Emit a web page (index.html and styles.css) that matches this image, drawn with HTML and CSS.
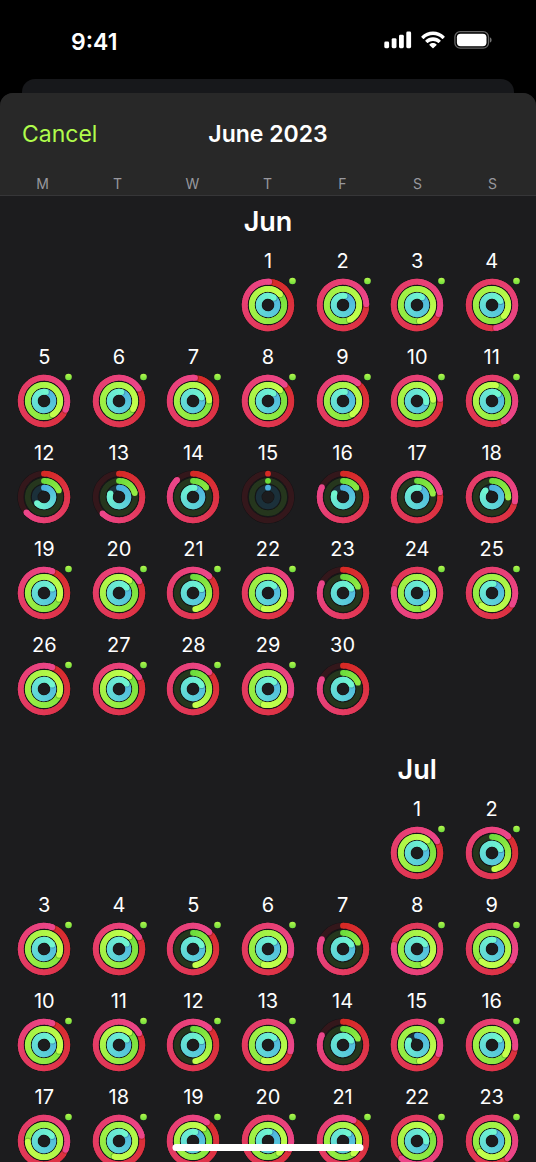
FILE: index.html
```html
<!DOCTYPE html>
<html lang="en">
<head>
<meta charset="utf-8">
<meta name="viewport" content="width=device-width, initial-scale=1">
<title>June 2023</title>
<link rel="stylesheet" href="styles.css">
</head>
<body>
<div class="screen">
  <div class="status-bar">
    <span class="status-time">9:41</span>
    <div class="status-icons">
      <svg class="icon-signal" viewBox="0 0 28 18" width="28" height="18" aria-hidden="true">
        <rect x="0.3" y="10.6" width="4.8" height="6.6" rx="1.4"/>
        <rect x="7.7" y="7.2" width="4.8" height="10" rx="1.4"/>
        <rect x="15" y="3.8" width="4.8" height="13.4" rx="1.4"/>
        <rect x="22.3" y="0.6" width="4.8" height="16.6" rx="1.4"/>
      </svg>
      <svg class="icon-wifi" viewBox="0 0 24 18" width="24" height="18" aria-hidden="true">
        <path d="M12 .6C7.600 .6 3.500 2.300.5 5.200c-.3.3-.3.7 0 1L2 7.700c.3.300.7.300 1 0C5.400 5.400 8.600 4.100 12 4.100s6.600 1.300 9 3.600c.3.300.7.300 1 0l1.500-1.500c.3-.3.300-.7 0-1C20.500 2.300 16.400.6 12 .6z"/>
        <path d="M12 6.300c-2.900 0-5.500 1.100-7.500 2.900-.3.300-.3.700 0 1L6.100 11.800c.3.300.7.300 1 0 1.300-1.200 3-1.900 4.900-1.900s3.600.7 4.900 1.900c.3.300.7.300 1 0l1.600-1.600c.3-.3.300-.7 0-1C17.500 7.400 14.900 6.300 12 6.300z"/>
        <path d="M12 11.900c-1.300 0-2.500.5-3.400 1.300-.3.300-.3.700 0 1l2.900 2.900c.3.300.7.300 1 0l2.900-2.900c.3-.3.300-.7 0-1-.9-.8-2.100-1.300-3.400-1.300z"/>
      </svg>
      <svg class="icon-battery" viewBox="0 0 38 18" width="38" height="18" aria-hidden="true">
        <rect x="0.900" y="0.700" width="33.600" height="16.500" rx="5.300" fill="none" stroke="#fff" stroke-opacity=".4" stroke-width="1.300"/>
        <rect x="2.900" y="2.700" width="29.600" height="12.500" rx="3.600"/>
        <path d="M35.900 6.300v5.300c1-.4 1.700-1.400 1.700-2.650s-.7-2.250-1.700-2.650z" fill-opacity=".45"/>
      </svg>
    </div>
  </div>
  <div class="sheet-behind"></div>
  <main class="sheet">
    <header class="sheet-header">
      <div class="nav">
        <button class="cancel" type="button">Cancel</button>
        <h1 class="nav-title">June 2023</h1>
      </div>
      <div class="weekdays">
        <span>M</span><span>T</span><span>W</span><span>T</span><span>F</span><span>S</span><span>S</span>
      </div>
    </header>
    <div class="months" id="months"></div>
  </main>
  <div class="home-indicator"></div>
</div>
<script src="calendar.js"></script>
</body>
</html>
```
FILE: styles.css
```css
* {
  box-sizing: border-box;
}

body {
  margin: 0;
  background: #000;
  color: #fff;
  font-family: Inter, "Liberation Sans", sans-serif;
}

.screen {
  position: relative;
  display: flex;
  flex-direction: column;
  height: 100vh;
  overflow: hidden;
}

.status-bar {
  display: flex;
  flex: none;
  align-items: center;
  justify-content: space-between;
  height: 79px;
  padding: 4px 44px 0 71px;
}

.status-time {
  font-size: 23px;
  font-weight: 600;
  line-height: 28px;
}

.status-icons {
  display: flex;
  align-items: center;
  gap: 9px;
  margin-bottom: 3px;
  fill: #fff;
}

.sheet-behind {
  flex: none;
  height: 14px;
  margin: 0 22px;
  border-radius: 13px 13px 0 0;
  background: #17181b;
}

.sheet {
  display: flex;
  flex: 1;
  flex-direction: column;
  min-height: 0;
  overflow: hidden;
  border-radius: 13px 13px 0 0;
  background: #1c1c1e;
}

.sheet-header {
  flex: none;
  border-bottom: 1px solid #363638;
  background: #282828;
}

.nav {
  display: grid;
  grid-template-columns: 1fr auto 1fr;
  align-items: center;
  height: 81px;
  padding: 0 22px;
}

.cancel {
  justify-self: start;
  padding: 0;
  border: 0;
  background: none;
  color: #b0fc4c;
  font: inherit;
  font-size: 23px;
  line-height: 28px;
}

.nav-title {
  margin: 0;
  font-size: 23px;
  font-weight: 600;
  line-height: 28px;
}

.weekdays {
  display: grid;
  grid-template-columns: repeat(7, 1fr);
  height: 21px;
  padding: 0 6px 0 5px;
  color: #98989e;
  font-size: 14px;
  line-height: 20px;
  text-align: center;
}

.months {
  flex: 1;
  min-height: 0;
  overflow-y: auto;
  padding: 0 7px;
  scrollbar-width: none;
}

.month {
  display: grid;
  grid-template-columns: repeat(7, 1fr);
  margin-bottom: 16px;
}

.month-title {
  grid-row: 1;
  margin: 0;
  font-size: 27px;
  font-weight: 600;
  line-height: 52px;
  text-align: center;
}

.day {
  display: flex;
  flex-direction: column;
  align-items: center;
  height: 96px;
  padding: 0;
  border: 0;
  background: none;
  color: #fff;
  font: inherit;
  font-size: 20px;
  line-height: 26px;
}

.rings {
  display: block;
  width: 60px;
  height: 60px;
  margin-top: 1px;
}

.home-indicator {
  position: absolute;
  bottom: 11px;
  left: 50%;
  width: 191px;
  height: 7px;
  border-radius: 4px;
  background: #fff;
  transform: translateX(-50%);
}
```
FILE: calendar.js
```js
// Each day holds the sweep of its move, exercise and stand rings in degrees,
// then 1 when a workout dot is shown.
const weekA = [
  [381, 471, 422, 1], [420, 400, 415, 1], [404, 172, 426, 1], [466, 555, 402, 1],
  [295, 67, 422, 0], [640, 516, 420, 1], [480, 580, 370, 1]
];

const months = [
  {
    name: "Jun",
    startColumn: 4,
    days: [
      [363, 408, 399, 1], [448, 515, 370, 1], [473, 530, 393, 1], [530, 493, 425, 1],
      [472, 507, 372, 1], [418, 480, 375, 1], [365, 448, 428, 1], [406, 408, 396, 1],
      [400, 505, 372, 1], [445, 446, 457, 1], [510, 374, 402, 1],
      [229, 66, 229, 0], [225, 76, 293, 0], [317, 54, 370, 0], [0, 0, 0, 0],
      [295, 55, 295, 0], [438, 78, 372, 0], [461, 92, 316, 0],
      ...weekA, ...weekA.slice(0, 5)
    ]
  },
  {
    name: "Jul",
    startColumn: 6,
    days: [
      weekA[1], weekA[2], ...weekA, ...weekA.slice(0, 5),
      [473, 530, 300, 1], [457, 486, 415, 1],
      [472, 628, 418, 1], [437, 556, 402, 1], [397, 400, 374, 1], [470, 497, 370, 1],
      [387, 500, 398, 1], [582, 410, 453, 1], [498, 588, 372, 1]
    ]
  }
];

const ringStyles = [
  { radius: 23.3, from: [214, 42, 36], to: [236, 70, 138], track: "#34171b" },
  { radius: 16.2, from: [108, 220, 60], to: [196, 255, 76], track: "#25361d" },
  { radius: 9.3, from: [76, 176, 224], to: [112, 246, 208], track: "#1b303a" }
];
const STROKE = 5.8;
const STEP = 10;
const OVERLAP = 9;
// A ring shorter than this does not reach its end colour.
const FULL_COLOUR_SWEEP = 170;

function point(radius, degrees) {
  const a = degrees * Math.PI / 180;
  return [(30 + radius * Math.sin(a)).toFixed(2), (30 - radius * Math.cos(a)).toFixed(2)];
}

function mix(from, to, t) {
  return `rgb(${from.map((c, i) => Math.round(c + (to[i] - c) * t)).join()})`;
}

function ring({ radius, from, to, track }, sweep) {
  const full = sweep >= 360;
  const start = full ? sweep - 360 : 0;
  const colourSpan = Math.max(sweep, FULL_COLOUR_SWEEP);
  const dot = (deg, fill, extra = "") => {
    const [x, y] = point(radius, deg);
    return `<circle cx="${x}" cy="${y}" r="${STROKE / 2}" fill="${fill}"${extra}/>`;
  };
  let out = `<circle cx="30" cy="30" r="${radius}" fill="none" stroke="#111113" stroke-width="${STROKE + 0.7}"/>`;
  if (!full) {
    out += `<circle cx="30" cy="30" r="${radius}" fill="none" stroke="${track}" stroke-width="${STROKE}"/>`;
    out += dot(0, mix(from, to, 0));
  }
  // Short arcs, each running on under the next one, make up the gradient.
  for (let a = start; a < sweep; a += STEP) {
    const end = Math.min(a + STEP, sweep);
    const [x1, y1] = point(radius, a);
    const [x2, y2] = point(radius, Math.min(end + OVERLAP, sweep));
    out += `<path d="M${x1} ${y1}A${radius} ${radius} 0 0 1 ${x2} ${y2}" fill="none" stroke="${mix(from, to, (a + end) / 2 / colourSpan)}" stroke-width="${STROKE}"/>`;
  }
  if (full) {
    out += dot(sweep + 60 / radius, "#000", ' fill-opacity=".2"');
  }
  if (sweep > 0) {
    out += dot(sweep, mix(from, to, sweep / colourSpan));
  }
  return out;
}

function rings(day) {
  const marker = day[3] ? '<circle cx="54.5" cy="6" r="3.3" fill="url(#marker)"/>' : "";
  return `<svg class="rings" viewBox="0 0 60 60" aria-hidden="true">${ringStyles.map((s, i) => ring(s, day[i])).join("")}${marker}</svg>`;
}

const markerGradient = `<svg width="0" height="0" style="position:absolute" aria-hidden="true"><defs>
<linearGradient id="marker" x1="0" y1="0" x2="0" y2="1"><stop offset="0" stop-color="#b4f84c"/><stop offset="1" stop-color="#6fdc3c"/></linearGradient>
</defs></svg>`;

document.getElementById("months").innerHTML = markerGradient + months.map(month => `
  <section class="month">
    <h2 class="month-title" style="grid-column:${month.startColumn}">${month.name}</h2>
    ${month.days.map((day, i) => `<button class="day" type="button"${i === 0 ? ` style="grid-column:${month.startColumn}"` : ""}><span>${i + 1}</span>${rings(day)}</button>`).join("")}
  </section>`).join("");
```
